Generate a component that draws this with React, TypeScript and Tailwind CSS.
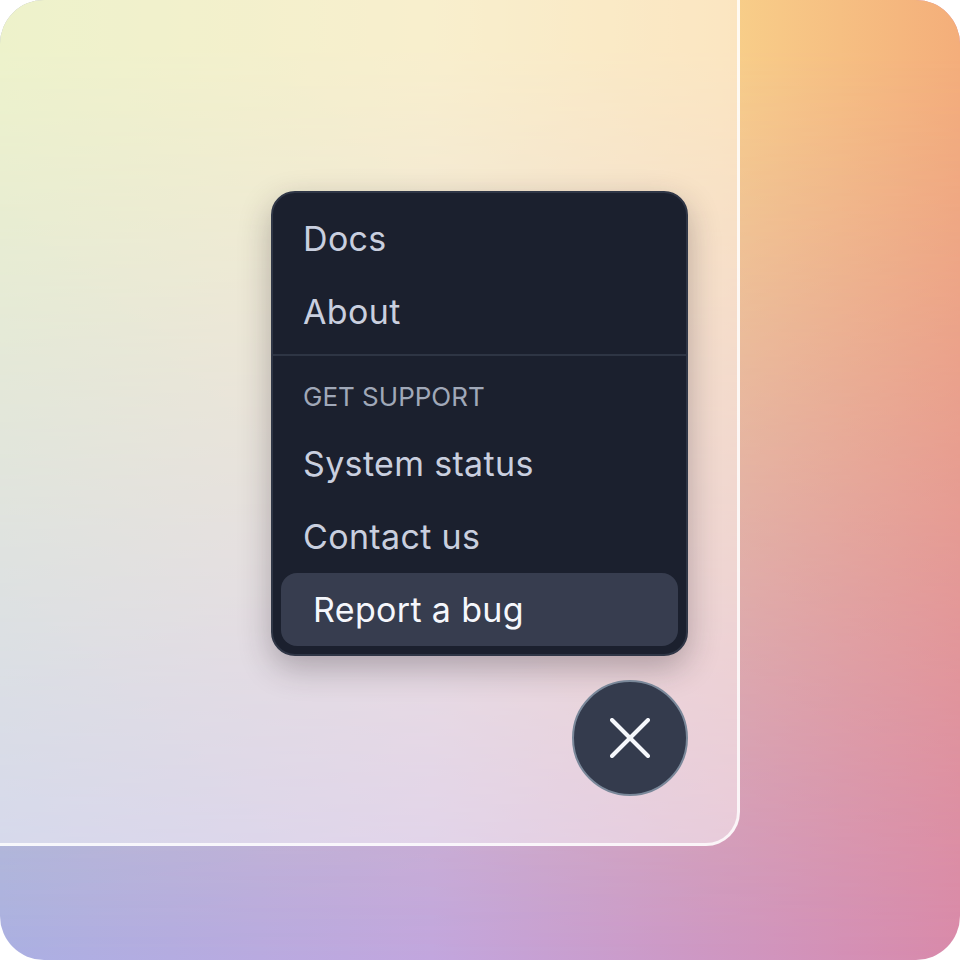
const topLinks = ["Docs", "About"];
const supportLinks = ["System status", "Contact us"];

function CloseIcon() {
  return (
    <svg width="40" height="40" viewBox="0 0 40 40" fill="none" stroke="currentColor" strokeWidth="4" strokeLinecap="round">
      <path d="M2 2 38 38" />
      <path d="M38 2 2 38" />
    </svg>
  );
}

export default function App() {
  return (
    <div className="grid w-[960px] h-[960px] overflow-hidden rounded-[44px] bg-[linear-gradient(to_right,#abb0e3_0%,#c2a6de_45%,#d98aab_100%)] font-['Inter','Noto_Sans',sans-serif]">
      {/* warm top half of the backdrop, faded out toward the bottom */}
      <div className="col-start-1 row-start-1 bg-[linear-gradient(to_right,#dde79c_0%,#f2e0a0_45%,#f8d08a_75%,#f4ae7a_100%)] [mask-image:linear-gradient(to_bottom,black_5%,transparent_100%)]" />

      <div className="col-start-1 row-start-1 isolate">
        <div className="flex flex-col items-end w-[740px] h-[846px] pt-[191px] pr-[49px] bg-white/[0.48] border-r-[3px] border-b-[3px] border-white/80 rounded-br-[34px]">
          <div className="w-[417px] rounded-[24px] border-2 border-[#2f3646] bg-[#1b202e] shadow-[0_12px_32px_rgba(40,30,40,0.3)]">
            <div className="pt-[9px] pb-[6px] px-2">
              {topLinks.map((label) => (
                <div key={label} className="flex items-center h-[73px] px-[22px] text-[34px] tracking-[0.01em] text-[#c9cfdf]">
                  {label}
                </div>
              ))}
            </div>
            <div className="h-[2px] bg-[#2e3544]" />
            <div className="pt-[10px] pb-2 px-2">
              <div className="flex items-center h-[61px] px-[22px] text-[26px] uppercase text-[#a0a8b8]">
                Get support
              </div>
              {supportLinks.map((label) => (
                <div key={label} className="flex items-center h-[73px] px-[22px] text-[34px] tracking-[0.01em] text-[#c9cfdf]">
                  {label}
                </div>
              ))}
              <div className="flex items-center h-[73px] px-[32px] rounded-[16px] bg-[#373d4f] text-[34px] tracking-[0.01em] text-[#f5f7fc]">
                Report a bug
              </div>
            </div>
          </div>

          <button className="flex items-center justify-center mt-[24px] w-[116px] h-[116px] rounded-full border-2 border-[#7a889a] bg-[#343b4d] text-[#f6f8fc]">
            <CloseIcon />
          </button>
        </div>
      </div>
    </div>
  );
}
